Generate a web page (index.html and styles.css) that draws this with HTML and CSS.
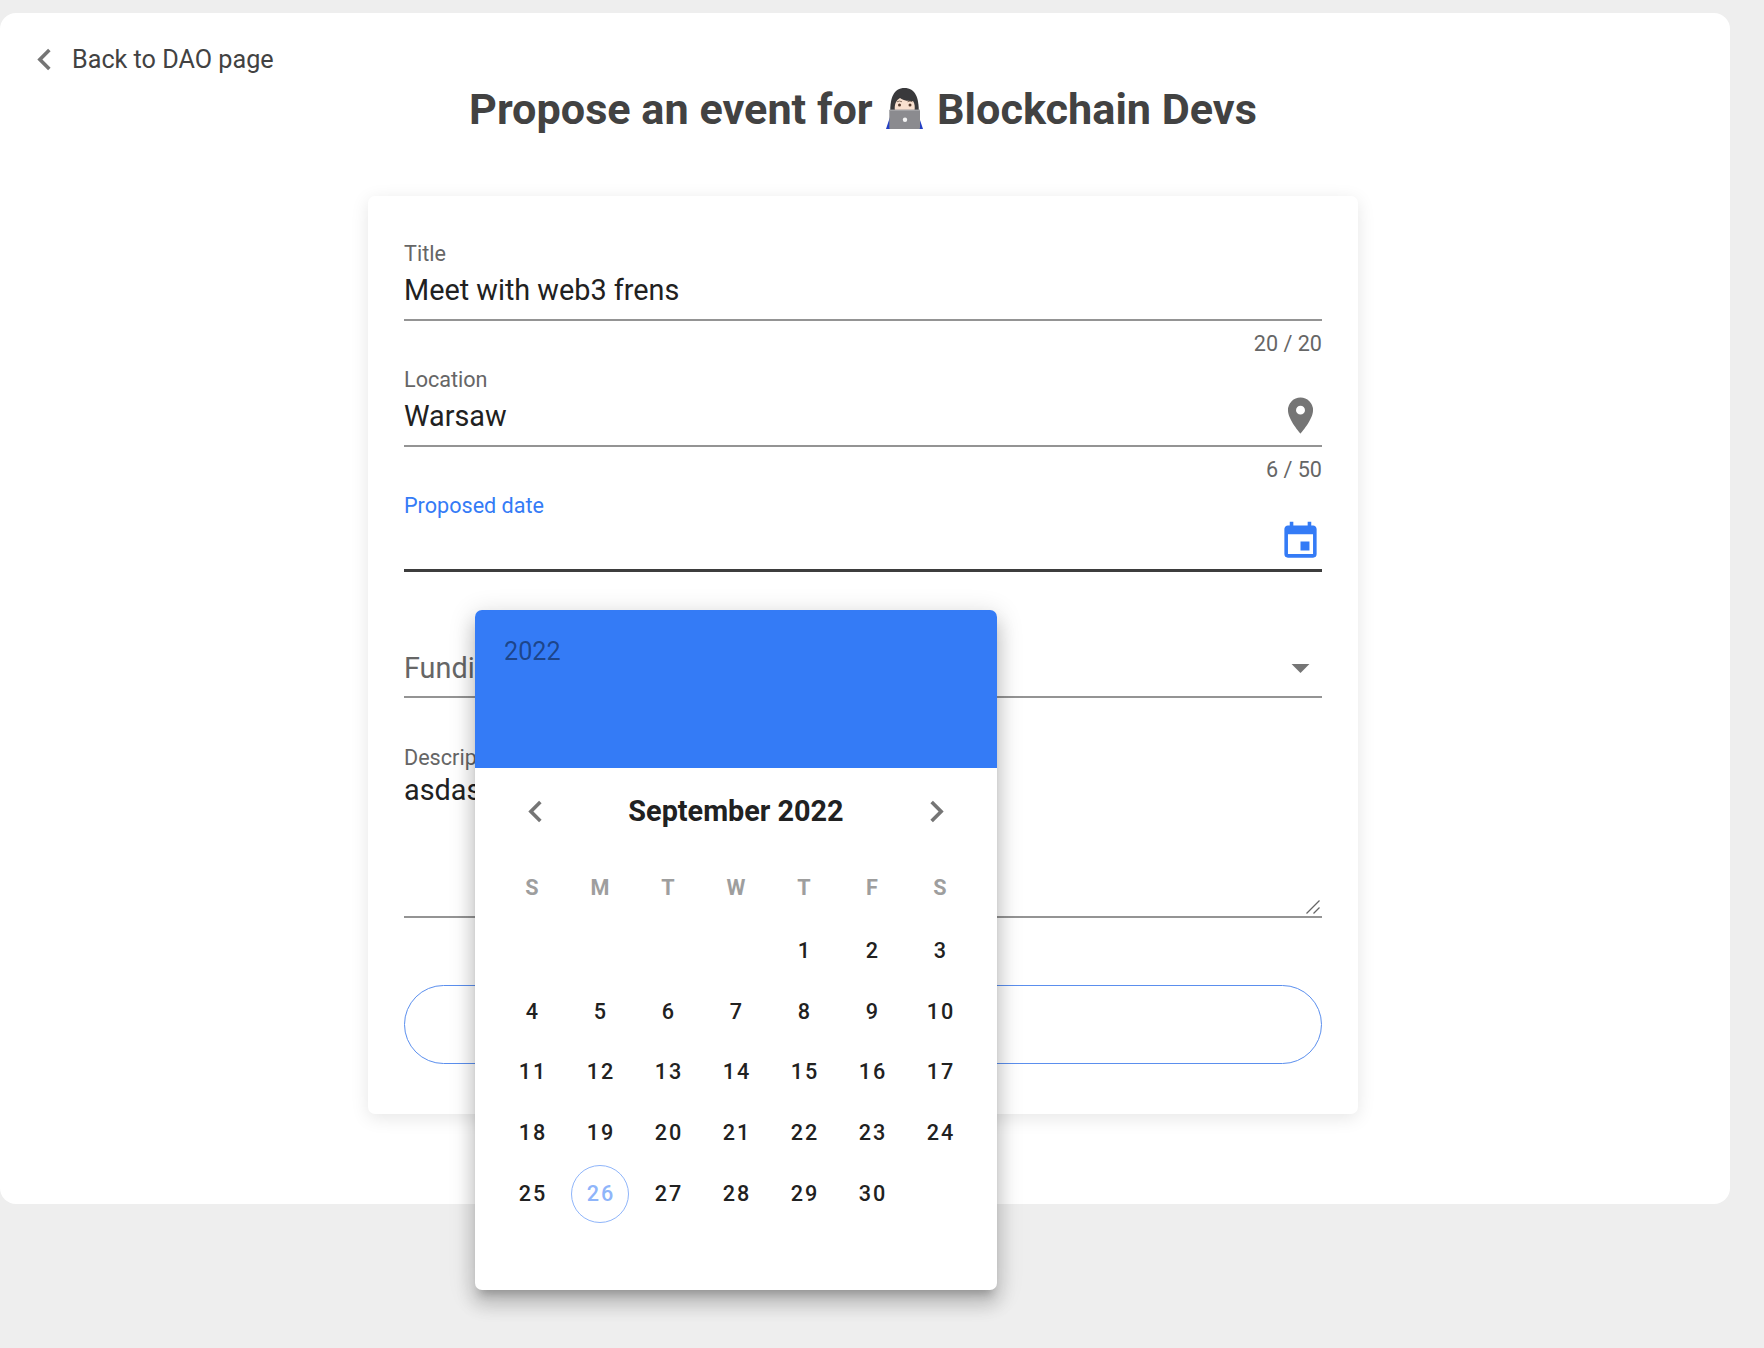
FILE: index.html
```html
<!DOCTYPE html>
<html lang="en">
<head>
<meta charset="utf-8">
<title>Propose an event</title>
<link rel="stylesheet" href="styles.css">
</head>
<body>
<main class="sheet">
  <a class="back">
    <svg class="back-icon" viewBox="0 0 24 24"><path d="M15.41,16.58L10.83,12L15.41,7.41L14,6L8,12L14,18L15.41,16.58Z"/></svg>
    <span>Back to DAO page</span>
  </a>
  <h1 class="heading">Propose an event for
    <svg class="emoji" viewBox="0 0 37 41">
      <path d="M0 41 5 26h27l5 15z" fill="#2440c4"/>
      <path d="M4.500 30C3 9 8 0 18.500 0S34 9 32.500 30z" fill="#39393b"/>
      <path d="M9 23c-1-6 1-11 5-13 4 3 9 3 13 3 2 3 2 6 1.500 10z" fill="#f8e0cf"/>
      <circle cx="13.500" cy="17" r="1.500" fill="#54392b"/>
      <circle cx="24" cy="17" r="1.500" fill="#54392b"/>
      <path d="M11 13.800q2.500-1.500 5 0M21.500 13.800q2.500-1.500 5 0" stroke="#6a5548" stroke-width=".8" fill="none"/>
      <rect x="3.300" y="21.700" width="30.700" height="19.300" rx="1" fill="#8b8b8f"/>
      <rect x="3.300" y="21.700" width="30.700" height="1.200" fill="#a5a5a8"/>
      <circle cx="19" cy="31.700" r="2.200" fill="#f4f4f4"/>
    </svg>
    Blockchain Devs</h1>

  <form class="card">
    <div class="field">
      <div class="label">Title</div>
      <div class="control"><span class="value">Meet with web3 frens</span></div>
      <div class="counter">20 / 20</div>
    </div>
    <div class="field">
      <div class="label">Location</div>
      <div class="control"><span class="value">Warsaw</span>
        <svg class="icon icon-grey" viewBox="0 0 24 24"><path d="M12,11.5A2.5,2.5 0 0,1 9.5,9A2.5,2.5 0 0,1 12,6.5A2.5,2.5 0 0,1 14.5,9A2.5,2.5 0 0,1 12,11.5M12,2A7,7 0 0,0 5,9C5,14.25 12,22 12,22C12,22 19,14.25 19,9A7,7 0 0,0 12,2Z"/></svg>
      </div>
      <div class="counter">6 / 50</div>
    </div>
    <div class="field">
      <div class="label label-active">Proposed date</div>
      <div class="control control-active"><span class="value"></span>
        <svg class="icon icon-blue" viewBox="0 0 24 24"><path d="M19,19H5V8H19M16,1V3H8V1H6V3H5C3.89,3 3,3.89 3,5V19A2,2 0 0,0 5,21H19A2,2 0 0,0 21,19V5C21,3.89 20.1,3 19,3H18V1M17,12H12V17H17V12Z"/></svg>
      </div>
    </div>
    <div class="select">
      <span class="placeholder">Funding source</span>
      <svg class="icon icon-grey" viewBox="0 0 24 24"><path d="M7,10L12,15L17,10H7Z"/></svg>
    </div>
    <div class="area">
      <div class="label">Description</div>
      <div class="area-text">asdasd</div>
      <svg class="resizer" viewBox="0 0 14 14"><path d="M0.500 13.500 13.500 0.500M7.500 13.500 13.500 7.500" stroke="#666" stroke-width="1.300" fill="none"/></svg>
    </div>
    <button class="submit" type="button" aria-label="Propose event"></button>
  </form>
</main>

<section class="picker">
  <header class="picker-head"><span class="picker-year">2022</span></header>
  <div class="picker-nav">
    <svg class="nav-icon" viewBox="0 0 24 24"><path d="M15.41,16.58L10.83,12L15.41,7.41L14,6L8,12L14,18L15.41,16.58Z"/></svg>
    <strong class="picker-month">September 2022</strong>
    <svg class="nav-icon" viewBox="0 0 24 24"><path d="M8.59,16.58L13.17,12L8.59,7.41L10,6L16,12L10,18L8.59,16.58Z"/></svg>
  </div>
  <div class="weekdays"><span>S</span><span>M</span><span>T</span><span>W</span><span>T</span><span>F</span><span>S</span></div>
  <div class="days">
    <span></span><span></span><span></span><span></span>
    <span>1</span><span>2</span><span>3</span>
    <span>4</span><span>5</span><span>6</span><span>7</span><span>8</span><span>9</span><span>10</span>
    <span>11</span><span>12</span><span>13</span><span>14</span><span>15</span><span>16</span><span>17</span>
    <span>18</span><span>19</span><span>20</span><span>21</span><span>22</span><span>23</span><span>24</span>
    <span>25</span><span class="today">26</span><span>27</span><span>28</span><span>29</span><span>30</span>
  </div>
</section>
</body>
</html>
```
FILE: styles.css
```css
* { box-sizing: border-box; }
html, body { margin: 0; height: 1348px; overflow: hidden; }
body {
  background: #eeeeee;
  font-family: Roboto, "Liberation Sans", sans-serif;
  color: #212121;
  padding-top: 13px;
  position: relative;
}
.sheet {
  width: 1730px;
  height: 1191px;
  background: #fff;
  border-radius: 16px;
  padding: 0 4px 0 0;
}
.back {
  display: flex;
  align-items: center;
  height: 93px;
  padding: 0 0 0 23px;
  font-size: 25.2px;
  color: #424242;
  margin-bottom: -46px;
}
.back-icon { width: 43px; height: 43px; fill: #757575; margin-right: 6px; }
.heading {
  margin: 0 0 46px;
  height: 90px;
  line-height: 99px;
  text-align: center;
  font-size: 43.2px;
  font-weight: 700;
  color: #424242;
}
.emoji { width: 37px; height: 41px; vertical-align: -5px; margin: 0 3px; }
.card {
  width: 990px;
  height: 918px;
  margin: 0 auto;
  padding: 36px 36px 50px;
  background: #fff;
  border-radius: 7px;
  box-shadow: 0 4px 18px rgba(0, 0, 0, .1);
}
.field { height: 126px; padding-top: 9px; }
.label { height: 24px; font-size: 21.6px; line-height: 26px; color: #666; }
.label-active { color: #347bf6; }
.control {
  display: flex;
  justify-content: space-between;
  height: 56px;
  border-bottom: 2px solid #949494;
}
.control-active { height: 55px; border-bottom: 3px solid #3d3d3d; }
.value { font-size: 28.8px; line-height: 50px; color: #212121; }
.icon { width: 43px; height: 43px; flex: none; margin-top: 3px; }
.icon-grey { fill: #757575; }
.icon-blue { fill: #347bf6; }
.counter {
  height: 37px;
  padding-top: 11px;
  text-align: right;
  font-size: 21.6px;
  line-height: 24px;
  color: #666;
}
.select {
  display: flex;
  justify-content: space-between;
  height: 88px;
  border-bottom: 2px solid #949494;
  padding-top: 36px;
}
.select .icon { margin-top: 0; }
.placeholder { font-size: 28.8px; line-height: 44px; color: #666; }
.area {
  display: flex;
  flex-direction: column;
  height: 220px;
  padding-top: 47px;
  border-bottom: 2px solid #949494;
}
.area-text { font-size: 28.8px; line-height: 42px; color: #212121; flex: 1; }
.resizer { width: 14px; height: 14px; align-self: flex-end; margin: 0 2px 2px 0; }
.submit {
  display: block;
  width: 100%;
  height: 79px;
  margin-top: 67px;
  border: 1.500px solid #5b8fee;
  border-radius: 40px;
  background: #fff;
}
.picker {
  position: absolute;
  left: 475px;
  top: 610px;
  width: 522px;
  height: 680px;
  background: #fff;
  border-radius: 7px;
  overflow: hidden;
  box-shadow: 0 9px 9px -5px rgba(0, 0, 0, .2), 0 14px 18px 2px rgba(0, 0, 0, .14), 0 5px 25px 4px rgba(0, 0, 0, .12);
}
.picker-head {
  height: 158px;
  background: #347bf6;
  padding: 27px 29px;
}
.picker-year { font-size: 25.2px; line-height: 30px; color: rgba(0, 0, 0, .46); display: block; }
.picker-nav {
  display: flex;
  align-items: center;
  justify-content: space-between;
  height: 86px;
  padding: 0 39px;
}
.nav-icon { width: 43px; height: 43px; fill: #757575; }
.picker-month { font-size: 28.8px; font-weight: 700; color: #212121; }
.weekdays, .days {
  display: grid;
  grid-template-columns: repeat(7, 68px);
  margin: 0 23px;
  text-align: center;
}
.weekdays {
  height: 66px;
  align-items: center;
  font-size: 21.6px;
  font-weight: 700;
  color: #9e9e9e;
}
.days {
  grid-auto-rows: 60.800px;
  align-items: center;
  justify-items: center;
  font-size: 21.6px;
  font-weight: 500;
  letter-spacing: 1.800px;
  text-indent: 1.800px;
  color: #212121;
}
.today {
  width: 58px;
  height: 58px;
  line-height: 56px;
  border: 1px solid #8fb5fa;
  border-radius: 50%;
  color: #8fb5fa;
}
```
